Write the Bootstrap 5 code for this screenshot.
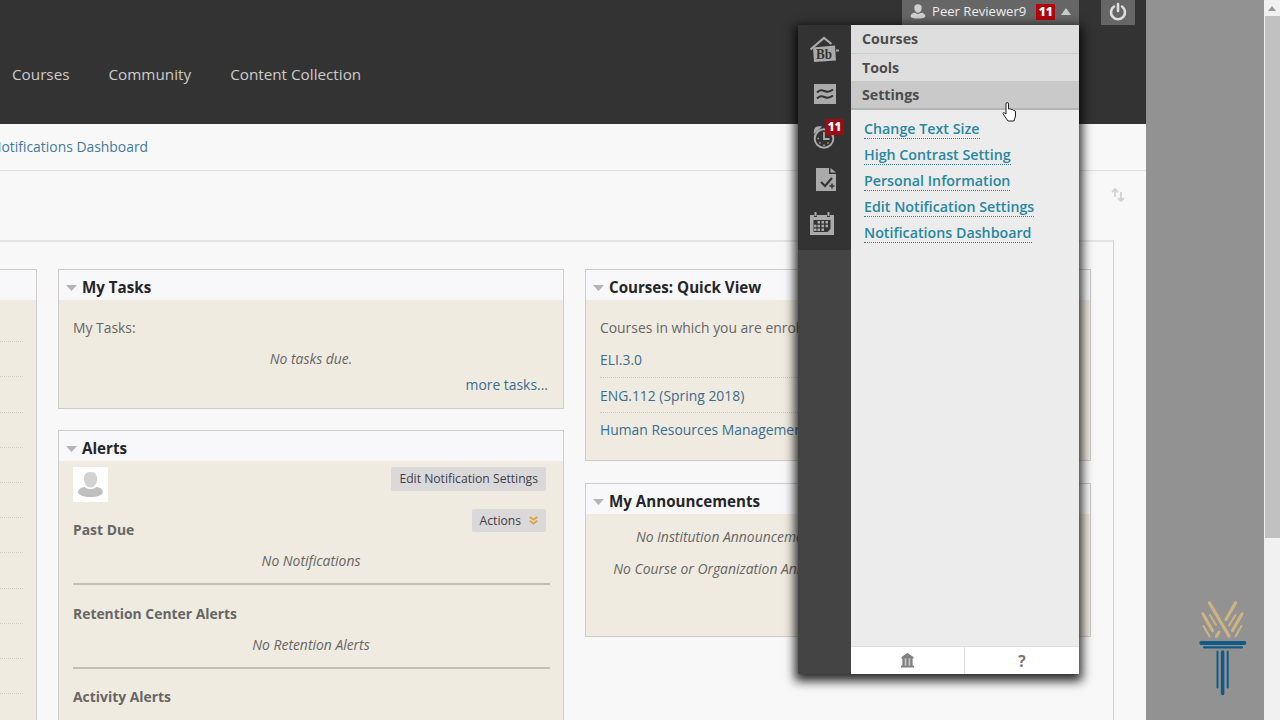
<!DOCTYPE html>
<html lang="en">
<head>
<meta charset="utf-8">
<meta name="viewport" content="width=device-width, initial-scale=1">
<title>Notifications Dashboard</title>
<link href="https://cdn.jsdelivr.net/npm/bootstrap@5.3.0/dist/css/bootstrap.min.css" rel="stylesheet">
<style>
body{font-family:"Open Sans","Noto Sans",sans-serif;font-size:13.9px;line-height:20px;color:#666;background:#929292;height:720px;overflow:hidden}
a{text-decoration:none;color:#3a6d8e}
.screen{height:720px}
.page{width:1146px;background:#f8f8f8;overflow:hidden}
.topbar{height:124px;background:#333}
.top-actions{padding-right:11px;gap:22px}
.top-btn{height:25px;background:#666;color:#eee;line-height:23px;padding-bottom:2px}
.user-btn{width:177px;padding-left:8px;font-size:13.1px}
.power-btn{width:34px}
.count{background:#b5050c;color:#fff;font-weight:800;font-size:12px;line-height:16px;width:19px;height:16px;text-align:center}
.main-nav{padding:39px 0 0 12px;gap:39px}
.main-nav .nav-link{font-size:15.25px;color:#ccc;padding:0;line-height:20px}
.crumbs{height:47px;border-bottom:1px solid #e0e0e0;line-height:46px;margin-left:-9px}
.crumbs a{color:#447a9b}
.tools{height:69px;padding-right:21px}
.board{width:1114px;height:480px;border-top:2px solid #e3e3e3;border-right:1px solid #d0d0d0;padding-top:27px;gap:21px}
.side{width:37px}
.wide{width:506px}
.module{border:1px solid #ccc;background:#efebe0;border-radius:0;color:#666}
.module-head{height:30px;margin-bottom:1px;background:#f8f8fa;color:#262626;font-size:15.15px;font-weight:700;line-height:20px;padding:3px 0 0 7px;gap:5px}
.tri{width:11px;height:6px;background:#b4b4b4;clip-path:polygon(0 0,100% 0,50% 100%);margin-top:3px}
.inner{padding:0 14px}
.dots{border-bottom:1px dotted #cbc7bc}
.side .module{border-left:0;height:500px;padding-top:30px;position:relative}
.side-row{height:35.2px;margin-right:13px;border-bottom:1px dotted #cfcbc0}
.rule{height:2px;background:#c4bfb3;margin-right:-1px}
.sub{font-weight:700;color:#666;line-height:20px}
.soft-btn{background:#dad8d9;color:#3f3f46;font-size:12.15px;line-height:24px;height:24px;border-radius:2px;padding:0 8px}
.avatar{width:35px;height:35px;background:#fff}
.menu{position:absolute;left:798px;top:25px;width:281px;height:649px;box-shadow:0 4px 10px 3px rgba(0,0,0,.85);z-index:5}
.rail{width:53px;background:#444}
.rail-top{height:225px;background:#333;padding-top:4px}
.rail-item{height:43.3px;position:relative}
.rail-item .count{position:absolute;left:27px;top:3px;background:#a00a12;font-size:11.5px}
.panel{background:#ececec}
.panel-head{height:28px;background:#dedede;color:#4c4c4c;font-size:14.2px;font-weight:700;padding-left:11px;line-height:28px;border-bottom:1px solid #ccc}
.panel-head.on{background:#c9c9c9;height:29px;line-height:28px;border-bottom:2px solid #b5b5b5}
.links{padding:9px 13px}
.links div{height:26px;line-height:19px}
.links a{display:inline-block;color:#2787a0;font-size:14.25px;font-weight:600;border-bottom:1px dotted #2787a0}
.panel-foot{height:28px;background:#fff;border-top:1px solid #ddd}
.help-mark{font-size:15.5px;color:#777;line-height:29px}
.cursor{position:absolute;left:1002px;top:102px;z-index:6}
.scroller{width:16px;background:#f1f1f1}
.thumb{height:522px;background:#c1c1c1;margin-left:1px}
.brand{width:118px;padding:600px 0 0 52px}
</style>
</head>
<body>
<div class="screen d-flex position-relative">
  <main class="page flex-shrink-0">
    <header class="topbar">
      <div class="top-actions d-flex justify-content-end">
        <div class="top-btn user-btn d-flex align-items-center">
          <svg width="16" height="15" viewBox="0 0 16 15" fill="#d0d0d0"><path d="M8 .2c2.800 0 4 1.800 3.700 4.300S10 8.800 8 8.800 4.600 7 4.300 4.500 5.200.2 8 .2zM.6 12.200C.8 10 2.600 9 4.800 8.800c2 1.500 4.400 1.500 6.400 0 2.200.2 4 1.200 4.200 3.400 0 1.600-3.400 2.400-7.400 2.400S.6 13.800.6 12.200z"/></svg>
          <span style="margin-left:6px">Peer Reviewer9</span>
          <span class="count" style="margin-left:10px">11</span>
          <svg width="10" height="7" style="margin-left:6px"><path d="M0 7 5 0l5 7z" fill="#ccc"/></svg>
        </div>
        <div class="top-btn power-btn d-flex align-items-center justify-content-center">
          <svg width="18" height="19" viewBox="0 0 18 19" fill="none" stroke="#dedede" stroke-width="2.600" stroke-linecap="round"><path d="M5 4.500a7 7 0 1 0 8 0M9 2v7"/></svg>
        </div>
      </div>
      <nav class="nav main-nav">
        <a class="nav-link" href="#">Courses</a><a class="nav-link" href="#">Community</a><a class="nav-link" href="#">Content Collection</a>
      </nav>
    </header>
    <div class="crumbs"><a href="#">Notifications Dashboard</a></div>
    <div class="tools d-flex justify-content-end align-items-center">
      <svg width="14" height="16" viewBox="0 0 14 16" fill="none" stroke="#d2d2d2" stroke-width="1.800" style="margin-top:-21px"><path d="M4 10V2M1 5l3-3 3 3M10 5v9M7 11l3 3 3-3"/></svg>
    </div>
    <div class="board d-flex align-items-start">
      <div class="side flex-shrink-0">
        <section class="module">
          <div class="module-head position-absolute top-0 start-0 w-100"></div>
          <div style="margin-top:7px">
            <div class="side-row"></div><div class="side-row"></div><div class="side-row"></div><div class="side-row"></div><div class="side-row"></div><div class="side-row"></div><div class="side-row"></div><div class="side-row"></div><div class="side-row"></div><div class="side-row"></div><div class="side-row"></div>
          </div>
        </section>
      </div>
      <div class="wide flex-shrink-0">
        <section class="module" style="height:140px;margin-bottom:21px">
          <div class="module-head d-flex align-items-center"><i class="tri"></i><span>My Tasks</span></div>
          <div class="inner" style="padding-top:17px">
            <div>My Tasks:</div>
            <div class="text-center fst-italic" style="margin-top:11px">No tasks due.</div>
            <div class="text-end" style="margin:6px 1px 0 0"><a href="#">more tasks...</a></div>
          </div>
        </section>
        <section class="module" style="height:330px">
          <div class="module-head d-flex align-items-center"><i class="tri"></i><span>Alerts</span></div>
          <div class="inner">
            <div class="d-flex justify-content-between align-items-start" style="padding:5px 3px 0 0">
              <div class="avatar d-flex justify-content-center align-items-center"><svg width="27" height="27" viewBox="0 0 27 27"><path d="M13.500 1c5 0 7 3.500 6.500 8s-3 7.500-6.500 7.500-6-3-6.500-7.500 1.500-8 6.500-8z" fill="#d2d2d2"/><path d="M1 21c.5-3 3-4.500 6.500-5 4 3 8 3 12 0 3.500.5 6 2 6.500 5 0 3-6 5-12.500 5S1 24 1 21z" fill="#bfbfbf"/></svg></div>
              <div class="d-flex flex-column align-items-end">
                <div class="soft-btn">Edit Notification Settings</div>
                <div class="soft-btn d-flex align-items-center" style="margin-top:18px;gap:8px;height:23px">Actions <svg width="9" height="9" viewBox="0 0 9 9" fill="none" stroke="#d9a536" stroke-width="1.700"><path d="M.8 1l3.700 2.800L8.200 1M.8 4.800l3.700 2.800 3.700-2.800"/></svg></div>
              </div>
            </div>
            <div class="sub" style="margin-top:-12px">Past Due</div>
            <div class="text-center fst-italic" style="margin-top:11px">No Notifications</div>
            <div class="rule" style="margin-top:12px"></div>
            <div class="sub" style="margin-top:19px">Retention Center Alerts</div>
            <div class="text-center fst-italic" style="margin-top:11px">No Retention Alerts</div>
            <div class="rule" style="margin-top:12px"></div>
            <div class="sub" style="margin-top:18px">Activity Alerts</div>
          </div>
        </section>
      </div>
      <div class="wide flex-shrink-0">
        <section class="module" style="height:192px;margin-bottom:22px">
          <div class="module-head d-flex align-items-center"><i class="tri"></i><span>Courses: Quick View</span></div>
          <div class="inner" style="padding-top:17px">
            <div>Courses in which you are enrolled:</div>
            <div class="dots" style="height:40px;padding-top:12px"><a href="#">ELI.3.0</a></div>
            <div class="dots" style="height:35px;padding-top:8px"><a href="#">ENG.112 (Spring 2018)</a></div>
            <div style="padding-top:7px"><a href="#">Human Resources Management</a></div>
          </div>
        </section>
        <section class="module" style="height:154px">
          <div class="module-head d-flex align-items-center"><i class="tri"></i><span>My Announcements</span></div>
          <div class="inner text-center fst-italic" style="padding:12px 12px 0 15px">
            <div>No Institution Announcements have been posted in the last 7 days.</div>
            <div style="margin-top:12px">No Course or Organization Announcements have been posted in the last 7 days.</div>
          </div>
        </section>
      </div>
    </div>
  </main>
  <aside class="brand flex-shrink-0">
    <svg width="52" height="98" viewBox="58 20 52 98" fill="none" stroke-linecap="round">
      <g stroke="#cdb482" stroke-width="3.200"><path d="M69.500 23 89 56M95.500 23 86 39.500M63 34l9.500 16.500M102 34 92.500 50.500"/></g>
      <g stroke="#cdb482" stroke-width="2"><path d="m70 35 6 10M95.500 35 89 45.500M63.500 46l6 10.500M101.500 46 95.500 56.500"/></g>
      <path d="M79 52 76.300 56.500" stroke="#cdb482" stroke-width="3"/>
      <g stroke="#115a88"><path d="M61.300 63h43" stroke-width="4"/><path d="M64 67.300h38" stroke-width="2.200"/><path d="M77.500 71.500v36M87.700 71.500v36" stroke-width="2"/><path d="M82.600 72v41.500" stroke-width="3.500"/></g>
    </svg>
  </aside>
  <div class="scroller flex-shrink-0">
    <div class="d-flex justify-content-center" style="height:16px;padding-top:6px"><svg width="8" height="5"><path d="M0 5 4 0l4 5z" fill="#999"/></svg></div>
    <div class="thumb"></div>
  </div>

  <div class="menu d-flex">
    <div class="rail flex-shrink-0"><div class="rail-top">
      <div class="rail-item d-flex align-items-center justify-content-center" style="padding:0 2px 4px 0"><svg width="30" height="28" viewBox="0 0 30 28"><path d="M1.500 14.500 15 3l7.500 6" fill="none" stroke="#aaa" stroke-width="2.200"/><path d="m4 12.500 22-2 1 15L5 27z" fill="#aaa"/><path d="M27 15.500h3" stroke="#aaa" stroke-width="2"/><text x="7" y="24" font-family="Liberation Serif,serif" font-size="14" font-weight="700" fill="#333" textLength="16" lengthAdjust="spacingAndGlyphs">Bb</text></svg></div>
      <div class="rail-item d-flex align-items-center justify-content-center"><svg width="22" height="20" viewBox="0 0 22 20"><path fill="#aaa" d="M0 0h22v20H0z"/><path d="M3 8.500c3-3 5-2.500 8-1.300s5 .8 8-1.700M3 14.500c3-3 5-2.500 8-1.300s5 .8 8-1.700" fill="none" stroke="#333" stroke-width="2"/></svg></div>
      <div class="rail-item d-flex align-items-center justify-content-center" style="padding:0 2px 2px 0"><svg width="22" height="26" viewBox="0 0 22 26" fill="none" stroke="#aaa"><circle cx="11" cy="15.500" r="9.300" stroke-width="2"/><path d="M11 9v7h5.500" stroke-width="1.800"/><path d="M1.500 9.500C1 5 4 3.500 7.500 4z" fill="#aaa" stroke-width="1.500"/><path d="M4.500 15.500H6M11 21.500V23M6.500 20.500l1-1M15.500 20.500l-1-1" stroke-width="1.500"/></svg><span class="count">11</span></div>
      <div class="rail-item d-flex align-items-center justify-content-center" style="padding:0 0 2px 2px"><svg width="20" height="23" viewBox="0 0 20 23"><path d="M0 0h13v6h7v17H0zM14.500 0 20 4.500h-5.500z" fill="#aaa"/><path d="m5 14 4 4 7-8" fill="none" stroke="#333" stroke-width="2.200"/><path d="M13.500 18h5M16 15.500v5" fill="none" stroke="#333" stroke-width="1.500"/></svg></div>
      <div class="rail-item d-flex align-items-center justify-content-center" style="padding-right:5px"><svg width="24" height="24" viewBox="0 0 24 24"><path d="M0 3h4v2h3V3h10v2h3V3h4v20H0zM4.500 0h2v4h-2zM17.500 0h2v4h-2z" fill="#aaa"/><path d="M3.500 8h17v9l-3 3h-14z" fill="#333"/><path d="M7.500 9h2.500v2.500H7.500zM11.500 9H14v2.500h-2.500zM15.500 9H18v2.500h-2.500zM4 12.700h2.500v2.500H4zM7.500 12.700h2.500v2.500H7.500zM11.500 12.700H14v2.500h-2.500zM15.500 12.700H18v2.500h-2.500zM4 16.400h2.500v2.500H4zM7.500 16.400h2.500v2.500H7.500zM11.500 16.400H14v2.500h-2.500z" fill="#aaa"/></svg></div>
    </div></div>
    <div class="panel flex-grow-1 d-flex flex-column">
      <div class="panel-head" style="height:29px">Courses</div>
      <div class="panel-head border-0" style="height:27px">Tools</div>
      <div class="panel-head on">Settings</div>
      <div class="links flex-grow-1">
        <div><a href="#">Change Text Size</a></div>
        <div><a href="#">High Contrast Setting</a></div>
        <div><a href="#">Personal Information</a></div>
        <div><a href="#">Edit Notification Settings</a></div>
        <div><a href="#">Notifications Dashboard</a></div>
      </div>
      <div class="panel-foot d-flex">
        <div class="w-50 d-flex align-items-center justify-content-center border-end"><svg width="13" height="15" viewBox="0 0 13 15" fill="#808080"><path d="M6.500 0 12.500 4v1.500H.5V4zM1.500 5.500h2.200v7H1.500zM5.400 5.500h2.200v7H5.400zM9.300 5.500h2.200v7H9.300zM0 12.500h13v2H0z"/><path d="M1.500 5.500h10v7h-10z" opacity=".45"/></svg></div>
        <div class="help-mark w-50 text-center fw-bold">?</div>
      </div>
    </div>
  </div>
  <svg class="cursor" width="15" height="20" viewBox="0 0 15 20"><path d="M4 11V2q0-1.500 1.200-1.500T6.500 2v5q2-.7 2.600.6 2-.4 2.400.9 2-.2 2 1.500v4L12 19H6L2.500 14 1 11.500q0-2 3 .5z" fill="#fff" stroke="#222"/></svg>
</div>
<script src="https://cdn.jsdelivr.net/npm/bootstrap@5.3.0/dist/js/bootstrap.bundle.min.js"></script>
</body>
</html>
